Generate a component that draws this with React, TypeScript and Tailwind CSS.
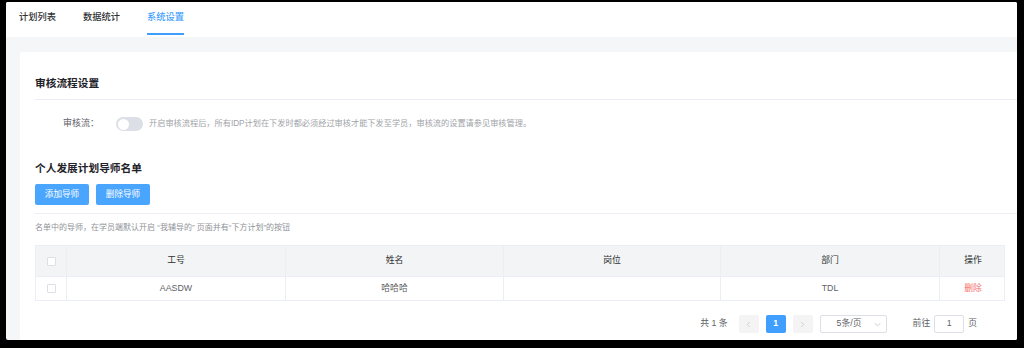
import React from "react";

const FONT = { fontFamily: '"Liberation Sans", "Noto Sans CJK SC", sans-serif' };

function Tabs() {
  const tabs = ["计划列表", "数据统计", "系统设置"];
  return (
    <div className="h-[35px] bg-white pl-[13px] flex gap-[27px] shrink-0">
      {tabs.map((t, i) => (
        <div key={t} className="flex flex-col h-full">
          <div
            className={
              "flex-1 flex items-center text-[9.25px] font-medium " +
              (i === 2 ? "text-[#409eff]" : "text-[#303133]")
            }
          >
            {t}
          </div>
          <div className={"h-[2px] mb-[2px] " + (i === 2 ? "bg-[#409eff]" : "bg-transparent")} />
        </div>
      ))}
    </div>
  );
}

function Checkbox() {
  return <div className="w-[9px] h-[9px] border border-[#dcdfe6] bg-white rounded-[1px]" />;
}

function Table() {
  const cols = "grid grid-cols-[31px_219px_218px_217px_219px_66px]";
  const headers = ["工号", "姓名", "岗位", "部门", "操作"];
  const row = ["AASDW", "哈哈哈", "", "TDL"];
  return (
    <div className="mt-[11px] border border-[#ebeef5] w-[970px]">
      <div className={cols + " h-[30px] bg-[#f3f4f5] text-[8.8px] text-[#303133]"}>
        <div className="flex items-center justify-center border-r border-[#ebeef5]">
          <Checkbox />
        </div>
        {headers.map((h, i) => (
          <div
            key={h}
            className={
              "flex items-center justify-center " + (i < headers.length - 1 ? "border-r border-[#ebeef5]" : "")
            }
          >
            {h}
          </div>
        ))}
      </div>
      <div className={cols + " h-[24px] bg-white text-[8.8px] text-[#606266] border-t border-[#ebeef5]"}>
        <div className="flex items-center justify-center border-r border-[#ebeef5]">
          <Checkbox />
        </div>
        {row.map((c, i) => (
          <div key={i} className="flex items-center justify-center border-r border-[#ebeef5]">
            {c}
          </div>
        ))}
        <div className="flex items-center justify-center text-[#f56c6c]">删除</div>
      </div>
    </div>
  );
}

function Chevron({ dir }: { dir: "left" | "right" | "down" }) {
  const d = dir === "left" ? "M6 1 L2 5 L6 9" : dir === "right" ? "M2 1 L6 5 L2 9" : "M1 3 L5 7 L9 3";
  const w = dir === "down" ? 10 : 8;
  return (
    <svg width={dir === "down" ? 7 : 5} height={7} viewBox={`0 0 ${w} 10`} fill="none">
      <path d={d} stroke="#c0c4cc" strokeWidth="1.2" />
    </svg>
  );
}

function Pagination() {
  return (
    <div className="mt-[14px] flex items-center justify-end pr-[40px] text-[8.8px] text-[#606266] h-[18px]">
      <span className="mr-[11px]">共 1 条</span>
      <div className="w-[20px] h-[18px] bg-[#f4f4f5] rounded-[2px] flex items-center justify-center">
        <Chevron dir="left" />
      </div>
      <div className="ml-[7px] w-[20px] h-[18px] bg-[#409eff] rounded-[2px] flex items-center justify-center text-white font-bold">
        1
      </div>
      <div className="ml-[7px] w-[20px] h-[18px] bg-[#f4f4f5] rounded-[2px] flex items-center justify-center">
        <Chevron dir="right" />
      </div>
      <div className="ml-[7px] w-[67px] h-[18px] border border-[#dcdfe6] rounded-[2px] flex items-center pl-[16px] pr-[5px] justify-between">
        <span>5条/页</span>
        <Chevron dir="down" />
      </div>
      <span className="ml-[26px]">前往</span>
      <div className="ml-[4px] w-[30px] h-[18px] border border-[#dcdfe6] rounded-[2px] flex items-center justify-center text-[#606266]">
        1
      </div>
      <span className="ml-[4px]">页</span>
    </div>
  );
}

function Card() {
  return (
    <div className="flex-1 bg-white ml-[14px] pt-[15px] pl-[15px] overflow-hidden">
      <div className="h-[33px] border-b border-[#ebeef5] flex items-center text-[10.7px] font-bold text-[#1f2329] w-[990px]">
        审核流程设置
      </div>
      <div className="mt-[4px] h-[40px] flex items-center">
        <span className="ml-[28px] text-[9px] text-[#606266] w-[53px]">审核流：</span>
        <div className="w-[27px] h-[14px] rounded-full bg-[#dcdfe6] p-[1.5px] flex items-center">
          <div className="w-[11px] h-[11px] rounded-full bg-white" />
        </div>
        <span className="ml-[6px] text-[8.2px] text-[#a0a3a8]">
          开启审核流程后，所有IDP计划在下发时都必须经过审核才能下发至学员，审核流的设置请参见审核管理。
        </span>
      </div>
      <div className="mt-[14px] h-[20px] flex items-center text-[10.7px] font-bold text-[#1f2329]">
        个人发展计划导师名单
      </div>
      <div className="mt-[6px] pb-[8px] border-b border-[#ebeef5] w-[990px] flex gap-[7px]">
        <div className="w-[54px] h-[21px] bg-[#4aa5ff] rounded-[2px] text-white text-[8.6px] flex items-center justify-center">
          添加导师
        </div>
        <div className="w-[54px] h-[21px] bg-[#4aa5ff] rounded-[2px] text-white text-[8.6px] flex items-center justify-center">
          删除导师
        </div>
      </div>
      <div className="mt-[8px] h-[12px] flex items-center text-[8px] text-[#909399]">
        名单中的导师，在学员端默认开启 “我辅导的” 页面并有“下方计划”的按钮
      </div>
      <Table />
      <Pagination />
    </div>
  );
}

export default function App() {
  return (
    <div className="w-[1024px] h-[348px] bg-black pt-[2px] pl-[6px] pr-[7px] pb-[8px]" style={FONT}>
      <div className="w-full h-full bg-[#f5f6f7] flex flex-col overflow-hidden rounded-[2px]">
        <Tabs />
        <div className="flex-1 flex pt-[15px] min-h-0">
          <Card />
        </div>
      </div>
    </div>
  );
}
